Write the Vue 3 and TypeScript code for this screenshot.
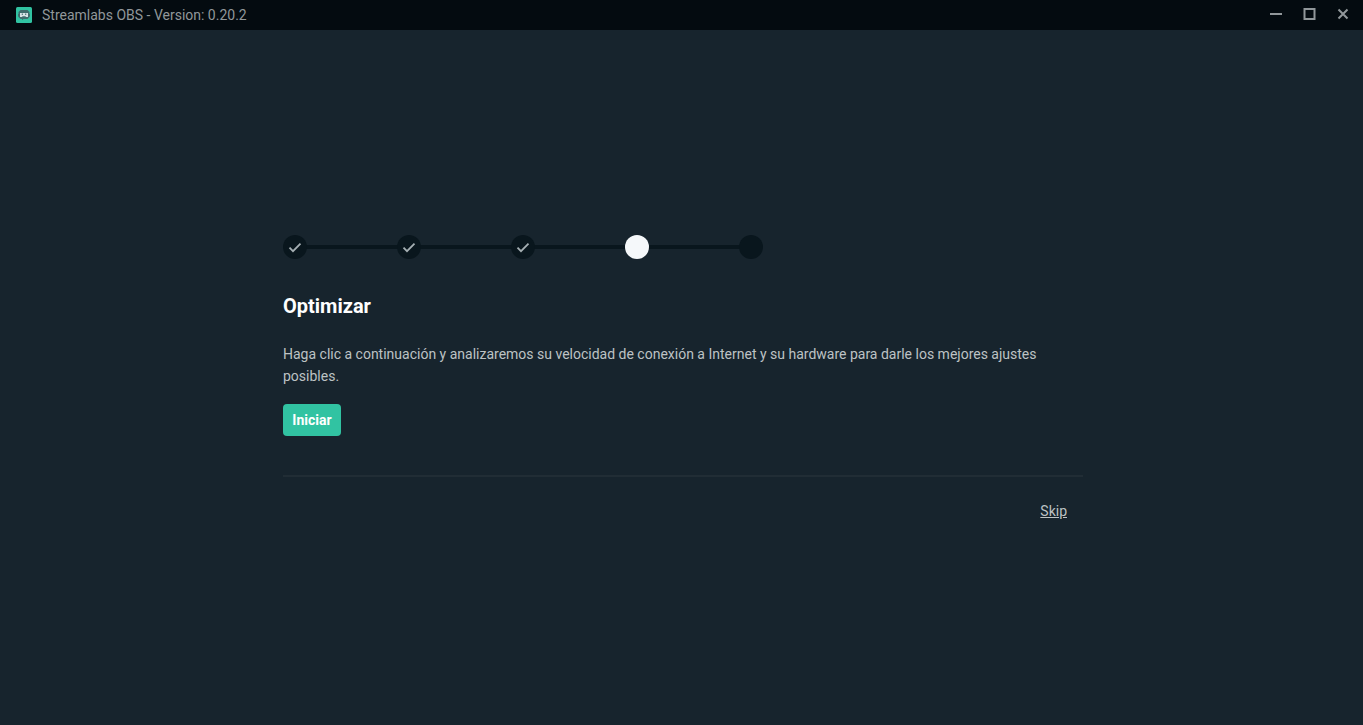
<script setup lang="ts">
type StepState = 'done' | 'current' | 'pending'

const steps: StepState[] = ['done', 'done', 'done', 'current', 'pending']
</script>

<template>
  <div class="window">
    <header class="titlebar">
      <svg class="logo" viewBox="0 0 16 16" aria-hidden="true">
        <rect width="16" height="16" rx="1.5" fill="#31c3a2" />
        <path d="M4.5 3h7l2 2v5l-2 2H7.5l-1.5 1.2V12H4.5l-2-2V5z" fill="#3f6c6d" />
        <path d="M4 6h8v4H4z" fill="#d5e2e5" />
        <path d="M5.8 6.6h1v1.5h-1zM9.2 6.6h1v1.5h-1zM6.3 9h3.4v.8H6.3z" fill="#3f6c6d" />
        <path d="M2 7h1v2.4H2zM13 7h1v2.4h-1z" fill="#3f6c6d" />
      </svg>
      <span class="app-name">Streamlabs OBS - Version: 0.20.2</span>
      <div class="controls">
        <button type="button" aria-label="Minimize">
          <svg viewBox="0 0 14 14"><path d="M2 7h12" stroke-width="2" /></svg>
        </button>
        <button type="button" aria-label="Maximize">
          <svg viewBox="0 0 14 14"><path d="M2.5 2h10v10h-10z" stroke-width="2" /></svg>
        </button>
        <button type="button" aria-label="Close">
          <svg viewBox="0 0 14 14"><path d="M2.5 2.5l9 9M11.5 2.5l-9 9" stroke-width="2" /></svg>
        </button>
      </div>
    </header>

    <main class="page">
      <section class="onboarding">
        <ol class="steps">
          <li v-for="(state, i) in steps" :key="i" class="step" :class="state">
            <svg v-if="state === 'done'" viewBox="0 0 24 24" aria-hidden="true">
              <path d="M6.5 12.7l3.5 3.5 7.5-7.5" />
            </svg>
          </li>
        </ol>
        <h1>Optimizar</h1>
        <p>
          Haga clic a continuación y analizaremos su velocidad de conexión a Internet y su hardware
          para darle los mejores ajustes posibles.
        </p>
        <button type="button" class="start">Iniciar</button>
        <footer class="actions">
          <a href="#">Skip</a>
        </footer>
      </section>
    </main>
  </div>
</template>

<style>
body {
  background: #17242d;
}
</style>

<style scoped>
.window {
  display: flex;
  flex-direction: column;
  min-height: 100vh;
  background: #17242d;
  color: #bdc2c4;
  font: 14px/22px Roboto, "Liberation Sans", sans-serif;
}

.titlebar {
  display: flex;
  align-items: center;
  box-sizing: border-box;
  height: 30px;
  padding: 0 13px 0 16px;
  background: #040b10;
  color: #91979a;
}

.logo {
  width: 16px;
  height: 16px;
  margin-right: 10px;
}

.controls {
  display: flex;
  gap: 20px;
  margin-left: auto;
  padding-bottom: 2px;
}

.controls button {
  display: flex;
  padding: 0;
  border: 0;
  background: none;
}

.controls svg {
  width: 14px;
  height: 14px;
  fill: none;
  stroke: #91979a;
}

.page {
  display: flex;
  flex: 1;
  align-items: center;
  justify-content: center;
  padding: 2px 0 0 3px;
}

.onboarding {
  width: 100%;
  max-width: 800px;
}

.steps {
  display: flex;
  justify-content: space-between;
  max-width: 480px;
  margin: 0;
  padding: 0;
  list-style: none;
  background: linear-gradient(#09161d, #09161d) center / calc(100% - 24px) 4px no-repeat;
}

.step {
  width: 24px;
  height: 24px;
  border-radius: 50%;
  background: #09161d;
}

.step.current {
  background: #f5f8fa;
}

.step svg {
  display: block;
  fill: none;
  stroke: #a5afb3;
  stroke-width: 1.8;
}

h1 {
  margin: 35px 0 25px;
  color: #fff;
  font-size: 20px;
  font-weight: 700;
  line-height: 24px;
}

p {
  margin: 0 0 17px;
}

.start {
  display: block;
  min-width: 58px;
  height: 32px;
  padding: 0 9px;
  border: 0;
  border-radius: 4px;
  background: #31c3a2;
  color: #fff;
  font: 700 14px/32px Roboto, "Liberation Sans", sans-serif;
}

.actions {
  margin-top: 39px;
  padding: 23px 16px 0;
  border-top: 2px solid #212d35;
  text-align: right;
}

.actions a {
  color: inherit;
  text-decoration: underline;
}
</style>
